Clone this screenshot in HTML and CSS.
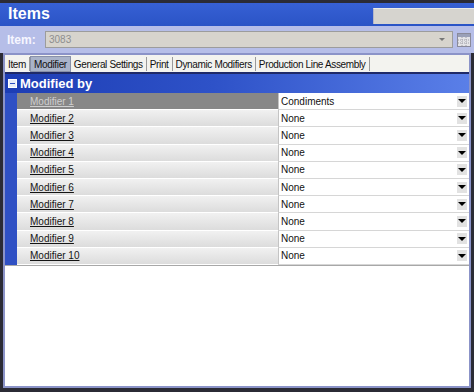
FILE: index.html
```html
<!DOCTYPE html>
<html lang="en">
<head>
    <meta charset="UTF-8">
    <meta name="viewport" content="width=device-width, initial-scale=1.0">
    <title>Items</title>
    <link rel="stylesheet" href="styles.css">
</head>
<body>

    <div class="window">
        <div class="titlebar">
            <span class="title">Items</span>
            <div class="title-box"></div>
        </div>

        <div class="itembar">
            <label for="item">Item:</label>
            <div class="combo" id="item">
                <span class="combo-text">3083</span>
                <span class="combo-arrow"></span>
            </div>
            <div class="grid-btn">
                <svg width="14" height="14" viewBox="0 0 14 14">
                    <rect x="0.5" y="0.5" width="13" height="13" fill="#e4e4e8" stroke="#8a8a9a"/>
                    <rect x="1" y="1" width="12" height="3" fill="#9aa0b8"/>
                    <path d="M1 7h12M1 10h12M5 4v9M9 4v9" stroke="#a0a0a8" stroke-width="1" stroke-dasharray="1 1"/>
                </svg>
            </div>
        </div>

        <div class="frame">
            <div class="tabs">
                <span class="tab">Item</span>
                <span class="tab active">Modifier</span>
                <span class="tab">General Settings</span>
                <span class="tab">Print</span>
                <span class="tab">Dynamic Modifiers</span>
                <span class="tab">Production Line Assembly</span>
            </div>

            <div class="group-header">
                <span class="collapse"></span>
                <span class="group-title">Modified by</span>
            </div>

            <div class="group-body">
                <div class="strip"></div>
                <div class="grid">
                    <div class="row">
                        <div class="label first">Modifier 1</div>
                        <div class="value"><span>Condiments</span><span class="drop"></span></div>
                    </div>
                    <div class="row">
                        <div class="label">Modifier 2</div>
                        <div class="value"><span>None</span><span class="drop"></span></div>
                    </div>
                    <div class="row">
                        <div class="label">Modifier 3</div>
                        <div class="value"><span>None</span><span class="drop"></span></div>
                    </div>
                    <div class="row">
                        <div class="label">Modifier 4</div>
                        <div class="value"><span>None</span><span class="drop"></span></div>
                    </div>
                    <div class="row">
                        <div class="label">Modifier 5</div>
                        <div class="value"><span>None</span><span class="drop"></span></div>
                    </div>
                    <div class="row">
                        <div class="label">Modifier 6</div>
                        <div class="value"><span>None</span><span class="drop"></span></div>
                    </div>
                    <div class="row">
                        <div class="label">Modifier 7</div>
                        <div class="value"><span>None</span><span class="drop"></span></div>
                    </div>
                    <div class="row">
                        <div class="label">Modifier 8</div>
                        <div class="value"><span>None</span><span class="drop"></span></div>
                    </div>
                    <div class="row">
                        <div class="label">Modifier 9</div>
                        <div class="value"><span>None</span><span class="drop"></span></div>
                    </div>
                    <div class="row">
                        <div class="label">Modifier 10</div>
                        <div class="value"><span>None</span><span class="drop"></span></div>
                    </div>
                </div>
            </div>
        </div>
    </div>

</body>
</html>
```

FILE: styles.css
```css
body {
    margin: 0;
    background-color: #2b2b35;
    font-family: "Liberation Sans", Arial, sans-serif;
}

.window {
    width: 474px;
    height: 392px;
    padding-top: 3px;
    box-sizing: border-box;
    display: flex;
    flex-direction: column;
}

.titlebar {
    height: 23px;
    flex: none;
    display: flex;
    justify-content: space-between;
    align-items: flex-start;
    background: linear-gradient(#3760d4, #2a54c6);
}

    .titlebar .title {
        color: #ffffff;
        font-weight: bold;
        font-size: 16px;
        line-height: 22px;
        padding-left: 8px;
    }

.title-box {
    width: 100px;
    height: 15px;
    margin-top: 5px;
    background-color: #d6d4cf;
    border-top: 1px solid #ecebe8;
    border-left: 1px solid #b4b6c8;
}

.itembar {
    height: 27px;
    flex: none;
    display: flex;
    align-items: center;
    padding: 0 3px 0 7px;
    background-color: #b6bee8;
}

    .itembar label {
        width: 38px;
        color: #f6f6ff;
        font-weight: bold;
        font-size: 12px;
    }

.combo {
    width: 408px;
    height: 17px;
    box-sizing: border-box;
    display: flex;
    align-items: center;
    justify-content: space-between;
    background-color: #d7d4cd;
    border: 1px solid #9c9c9c;
}

.combo-text {
    color: #8e8e8e;
    font-size: 10px;
    padding-left: 3px;
}

.combo-arrow {
    width: 0;
    height: 0;
    margin-right: 7px;
    border-left: 3px solid transparent;
    border-right: 3px solid transparent;
    border-top: 3px solid #777777;
}

.grid-btn {
    width: 14px;
    height: 14px;
    margin-left: 4px;
    display: flex;
}

.frame {
    flex: 1;
    margin: 0 3px 4px;
    border: 2px solid #8b93c8;
    background-color: #ffffff;
    display: flex;
    flex-direction: column;
}

.tabs {
    height: 17px;
    flex: none;
    display: flex;
    align-items: stretch;
    background-color: #f3f3ef;
    border-bottom: 2px solid #1f2a68;
    font-size: 10px;
    letter-spacing: -0.35px;
    color: #111111;
}

.tab {
    display: flex;
    align-items: center;
    padding: 0 3px;
    margin: 2px 0 1px;
    border-right: 1px solid #9a9a9a;
}

    .tab.active {
        margin: 1px 0 0;
        background-color: #a9b3c9;
        border: 1px solid #8890a8;
    }

.group-header {
    height: 19px;
    flex: none;
    display: flex;
    align-items: center;
    background: linear-gradient(90deg, #1d3db4, #2e52c8 45%, #5a7fe8);
}

.collapse {
    width: 9px;
    height: 9px;
    margin-left: 3px;
    box-sizing: border-box;
    background: linear-gradient(#2e4fc0, #2e4fc0) center / 5px 1px no-repeat, #e8ecf8;
    border: 1px solid #ffffff;
}

.group-title {
    color: #ffffff;
    font-weight: bold;
    font-size: 13px;
    margin-left: 3px;
}

.group-body {
    display: flex;
    border-bottom: 1px solid #a8a8a8;
}

.strip {
    width: 12px;
    flex: none;
    background-color: #2f50c4;
}

.grid {
    flex: 1;
}

.row {
    height: 17.2px;
    display: flex;
    font-size: 10px;
}

.label {
    width: 261px;
    box-sizing: border-box;
    padding-left: 13px;
    display: flex;
    align-items: center;
    color: #151515;
    text-decoration: underline;
    background: linear-gradient(#f1f1f1, #dcdcdc);
    border-bottom: 1px solid #ffffff;
}

    .label.first {
        background: #878787;
        color: #cfcfcf;
    }

.value {
    flex: 1;
    display: flex;
    align-items: center;
    justify-content: space-between;
    padding-left: 2px;
    color: #111111;
    border-left: 1px solid #c4c4c4;
    border-bottom: 1px solid #d6d6d6;
}

.drop {
    width: 10px;
    height: 11px;
    margin-right: 2px;
    display: flex;
    align-items: center;
    justify-content: center;
    background-color: #e2e2e2;
}

    .drop::after {
        content: "";
        border-left: 4px solid transparent;
        border-right: 4px solid transparent;
        border-top: 4px solid #000000;
    }
```
